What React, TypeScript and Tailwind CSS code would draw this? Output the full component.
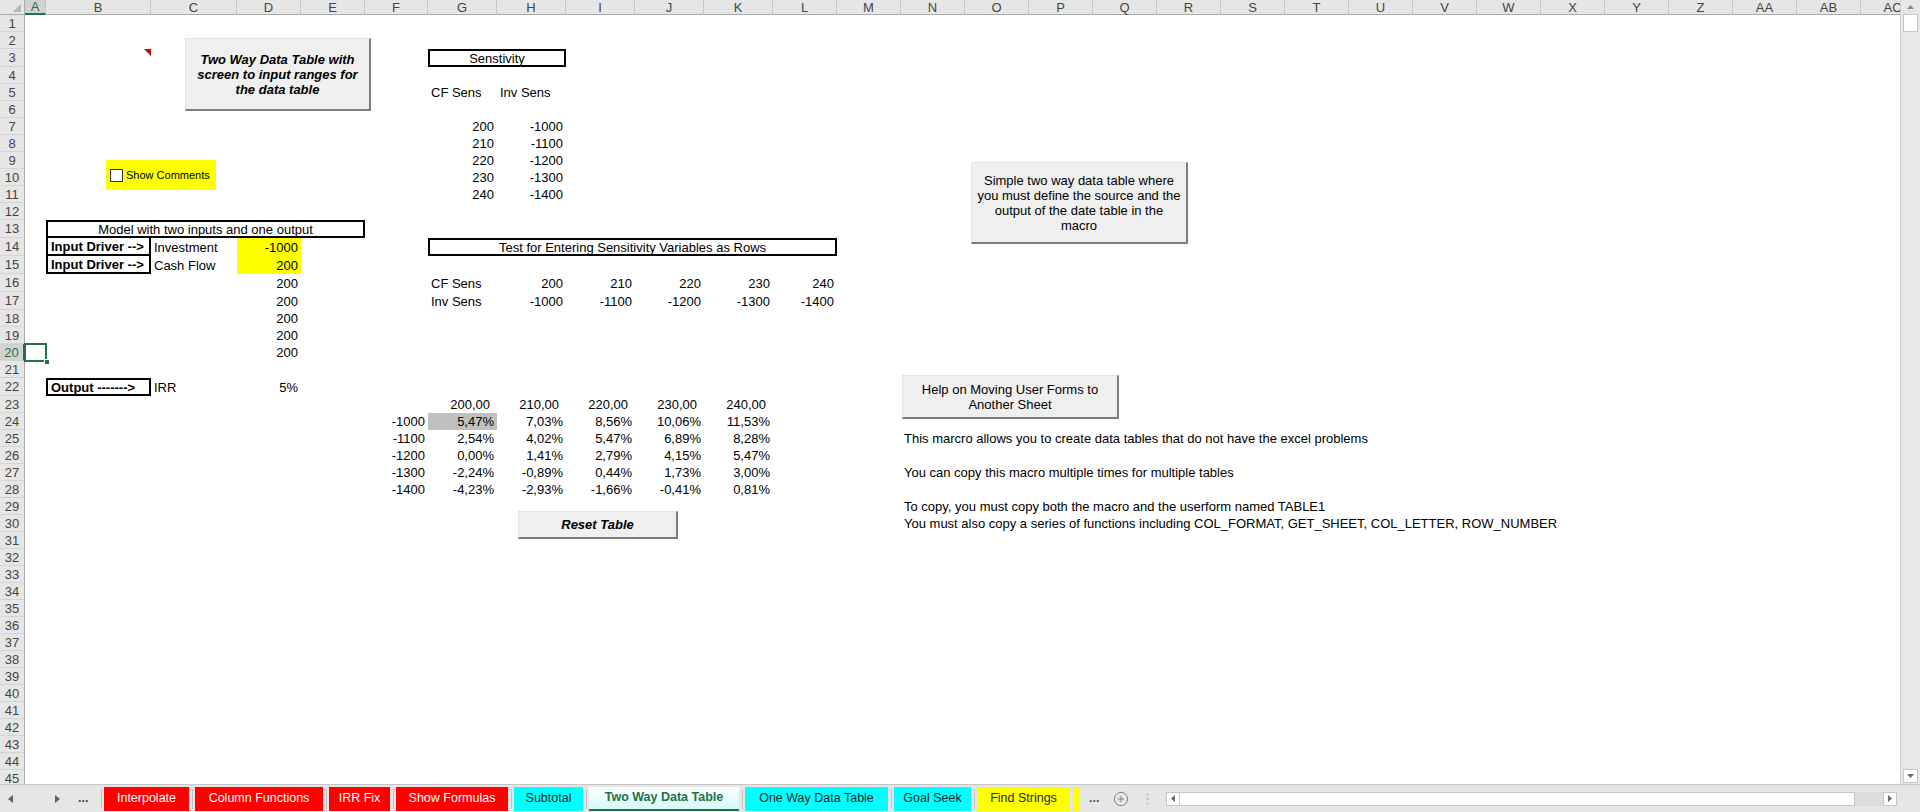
import React from 'react';
import { CirclePlus } from 'lucide-react';

type Cell = { t?: string; cls?: string; span?: number; extra?: React.ReactNode };
type Row = Record<string, Cell>;

const COLS = ['A', 'B', 'C', 'D', 'E', 'F', 'G', 'H', 'I', 'J', 'K', 'L', 'M', 'N', 'O', 'P', 'Q', 'R', 'S', 'T', 'U', 'V', 'W', 'X', 'Y', 'Z', 'AA', 'AB', 'AC'];

const R = 'justify-end';
const YEL = 'justify-end bg-[#ffff00]';

const CommentMark = () => (
  <span className="absolute right-0 top-0 h-0 w-0 border-l-[7px] border-t-[7px] border-l-transparent border-t-[#e00000]" />
);

const ActiveCell = () => (
  <>
    <span className="absolute -left-px -top-px -right-px -bottom-px border-2 border-[#217346]" />
    <span className="absolute -right-[4px] -bottom-[4px] h-[6px] w-[6px] border border-white bg-[#217346]" />
  </>
);

// sheet contents, by row number then column letter
const sheet: Record<number, Row> = {
  3: {
    B: { cls: 'relative', extra: <CommentMark /> },
    G: { t: 'Senstivity', span: 2, cls: 'col-span-2 justify-center border-2 border-black' },
  },
  5: { G: { t: 'CF Sens' }, H: { t: 'Inv Sens' } },
  13: {
    B: { t: 'Model with two inputs and one output', span: 4, cls: 'col-span-4 justify-center border-2 border-black' },
  },
  14: {
    B: { t: 'Input Driver -->', cls: 'font-bold border-x-2 border-b-2 border-black' },
    C: { t: 'Investment' },
    D: { t: '-1000', cls: YEL },
    G: { t: 'Test for Entering Sensitivity Variables as Rows', span: 6, cls: 'col-span-6 justify-center border-2 border-black' },
  },
  15: {
    B: { t: 'Input Driver -->', cls: 'font-bold border-x-2 border-b-2 border-black' },
    C: { t: 'Cash Flow' },
    D: { t: '200', cls: YEL },
  },
  16: {
    D: { t: '200', cls: R },
    G: { t: 'CF Sens' },
    H: { t: '200', cls: R },
    I: { t: '210', cls: R },
    J: { t: '220', cls: R },
    K: { t: '230', cls: R },
    L: { t: '240', cls: R },
  },
  17: {
    D: { t: '200', cls: R },
    G: { t: 'Inv Sens' },
    H: { t: '-1000', cls: R },
    I: { t: '-1100', cls: R },
    J: { t: '-1200', cls: R },
    K: { t: '-1300', cls: R },
    L: { t: '-1400', cls: R },
  },
  18: { D: { t: '200', cls: R } },
  19: { D: { t: '200', cls: R } },
  20: { A: { cls: 'relative z-10', extra: <ActiveCell /> }, D: { t: '200', cls: R } },
  22: {
    B: { t: 'Output ------->', cls: 'font-bold border-2 border-black' },
    C: { t: 'IRR' },
    D: { t: '5%', cls: R },
  },
  23: {
    G: { t: '200,00', cls: 'justify-end pr-[7px]' },
    H: { t: '210,00', cls: 'justify-end pr-[7px]' },
    I: { t: '220,00', cls: 'justify-end pr-[7px]' },
    J: { t: '230,00', cls: 'justify-end pr-[7px]' },
    K: { t: '240,00', cls: 'justify-end pr-[7px]' },
  },
};

// sensitivity list rows 7-11
[['200', '-1000'], ['210', '-1100'], ['220', '-1200'], ['230', '-1300'], ['240', '-1400']].forEach(([a, b], i) => {
  sheet[7 + i] = { G: { t: a, cls: R }, H: { t: b, cls: R } };
});

// data table result rows 24-28
const results: [string, string[]][] = [
  ['-1000', ['5,47%', '7,03%', '8,56%', '10,06%', '11,53%']],
  ['-1100', ['2,54%', '4,02%', '5,47%', '6,89%', '8,28%']],
  ['-1200', ['0,00%', '1,41%', '2,79%', '4,15%', '5,47%']],
  ['-1300', ['-2,24%', '-0,89%', '0,44%', '1,73%', '3,00%']],
  ['-1400', ['-4,23%', '-2,93%', '-1,66%', '-0,41%', '0,81%']],
];
results.forEach(([inv, vals], i) => {
  const row: Row = { F: { t: inv, cls: R } };
  ['G', 'H', 'I', 'J', 'K'].forEach((c, j) => {
    row[c] = { t: vals[j], cls: i === 0 && j === 0 ? 'justify-end bg-[#c0c0c0]' : R };
  });
  sheet[24 + i] = row;
});

sheet[25].N = { t: 'This marcro allows you to create data tables that do not have the excel problems' };
sheet[27].N = { t: 'You can copy this macro multiple times for multiple tables' };
sheet[29] = { N: { t: 'To copy, you must copy both the macro and the userform named TABLE1' } };
sheet[30] = { N: { t: 'You must also copy a series of functions including COL_FORMAT, GET_SHEET, COL_LETTER, ROW_NUMBER' } };

const TALL = [3, 13, 14, 15, 16, 17, 22];

const FormButton = ({ className, children }: { className: string; children: React.ReactNode }) => (
  <div
    className={`absolute z-20 flex items-center justify-center text-center text-[13px] leading-[15px] text-black bg-[#efefef] border-t border-l border-[#e2e2e2] border-r-2 border-b-2 border-r-[#7d7d7d] border-b-[#7d7d7d] ${className}`}
  >
    {children}
  </div>
);

const Sheet = () => {
  const cells: React.ReactNode[] = [];

  // column header row
  cells.push(
    <div key="corner" className="relative bg-[#e6e6e6] border-r border-b border-[#ababab]">
      <svg className="absolute right-[3px] bottom-[2px]" width="8" height="8" viewBox="0 0 8 8">
        <polygon points="8,0 8,8 0,8" fill="#b5b5b5" />
      </svg>
    </div>
  );
  COLS.forEach((c) => {
    cells.push(
      <div
        key={`h-${c}`}
        className={
          c === 'A'
            ? 'flex items-center justify-center text-[13px] leading-none bg-[#d2d2d2] text-[#217346] border-b-2 border-[#217346] border-r border-r-[#c6c6c6]'
            : 'flex items-center justify-center text-[13px] leading-none bg-[#e6e6e6] text-[#444] border-b border-[#ababab] border-r border-r-[#c6c6c6]'
        }
      >
        {c}
      </div>
    );
  });

  for (let r = 1; r <= 45; r++) {
    cells.push(
      <div
        key={`r-${r}`}
        className={
          r === 20
            ? 'flex items-center justify-center text-[13px] leading-none bg-[#d2d2d2] text-[#217346] border-r-2 border-[#217346] border-b border-b-[#d4d4d4]'
            : 'flex items-center justify-center text-[13px] leading-none bg-[#e6e6e6] text-[#444] border-r border-[#ababab] border-b border-b-[#d4d4d4]'
        }
      >
        {r}
      </div>
    );
    const def = sheet[r] || {};
    let skip = 0;
    COLS.forEach((col) => {
      if (skip > 0) {
        skip--;
        return;
      }
      const c = def[col];
      if (c?.span) skip = c.span - 1;
      cells.push(
        <div
          key={`${col}${r}`}
          className={`flex items-center whitespace-nowrap px-[3px] text-[13px] leading-none text-black ${c?.cls ?? ''}`}
        >
          {c?.t}
          {c?.extra}
        </div>
      );
    });
  }

  return (
    <div className="relative h-full w-[1900px] overflow-hidden bg-white">
      <div className="grid grid-cols-[25px_21px_105px_86px_64px_64px_63px_69px_69px_69px_69px_69px_repeat(18,64px)] grid-rows-[15px_17px_17px_18px_17px_17px_17px_17px_17px_17px_17px_17px_17px_18px_18px_18px_18px_18px_17px_17px_17px_17px_18px_repeat(23,17px)]">
        {cells}
      </div>

      <FormButton className="left-[185px] top-[38px] w-[186px] h-[73px] font-bold italic">
        Two Way Data Table with
        <br />
        screen to input ranges for
        <br />
        the data table
      </FormButton>

      <div className="absolute left-[106px] top-[160px] z-20 flex h-[30px] w-[110px] items-center gap-[3px] bg-[#ffff00] pl-[4px]">
        <span className="h-[13px] w-[13px] border border-[#333] bg-white" />
        <span className="text-[11px] leading-none text-black">Show Comments</span>
      </div>

      <FormButton className="left-[971px] top-[162px] w-[217px] h-[82px]">
        Simple two way data table where
        <br />
        you must define the source and the
        <br />
        output of the date table in the
        <br />
        macro
      </FormButton>

      <FormButton className="left-[902px] top-[375px] w-[217px] h-[44px]">
        Help on Moving User Forms to
        <br />
        Another Sheet
      </FormButton>

      <FormButton className="left-[518px] top-[511px] w-[160px] h-[28px] font-bold italic">Reset Table</FormButton>
    </div>
  );
};

const VScroll = () => (
  <div className="flex h-full w-[20px] flex-col bg-[#e8e8e8] border-l border-[#d0d0d0]">
    <div className="flex h-[14px] items-center justify-center">
      <svg width="7" height="4" viewBox="0 0 7 4">
        <polygon points="0,4 3.5,0 7,4" fill="#8a8a8a" />
      </svg>
    </div>
    <div className="mx-[2px] h-[18px] border border-[#c6c6c6] bg-white" />
    <div className="flex-1" />
    <div className="mx-[2px] mb-px flex h-[14px] items-center justify-center border border-[#c6c6c6] bg-white">
      <svg width="7" height="4" viewBox="0 0 7 4">
        <polygon points="0,0 7,0 3.5,4" fill="#6a6a6a" />
      </svg>
    </div>
  </div>
);

type Tab = { name: string; w: string; cls: string };
const tabs: Tab[] = [
  { name: 'Interpolate', w: 'w-[85px]', cls: 'bg-[#ff0000] text-white' },
  { name: 'Column Functions', w: 'w-[128px]', cls: 'bg-[#ff0000] text-white' },
  { name: 'IRR Fix', w: 'w-[61px]', cls: 'bg-[#ff0000] text-white' },
  { name: 'Show Formulas', w: 'w-[112px]', cls: 'bg-[#ff0000] text-white' },
  { name: 'Subtotal', w: 'w-[69px]', cls: 'bg-[#00ffff] text-[#262626]' },
  {
    name: 'Two Way Data Table',
    w: 'w-[150px]',
    cls: 'bg-linear-to-b from-white to-[#d4fafa] text-[#217346] font-bold border-b-2 border-[#217346]',
  },
  { name: 'One Way Data Table', w: 'w-[143px]', cls: 'bg-[#00ffff] text-[#262626]' },
  { name: 'Goal Seek', w: 'w-[77px]', cls: 'bg-[#00ffff] text-[#262626]' },
  { name: 'Find Strings', w: 'w-[93px]', cls: 'bg-[#ffff00] text-[#262626]' },
];

const Sep = () => (
  <div className="flex h-[24px] w-[6px] items-center justify-center">
    <div className="h-[20px] w-px bg-[#c2c2c2]" />
  </div>
);

const TabBar = () => (
  <div className="flex h-[28px] w-full items-center border-t border-[#c6c6c6] bg-[#e6e6e6] text-[12.5px]">
    <div className="flex h-[24px] w-[98px] items-center">
      <svg className="ml-[8px]" width="5" height="8" viewBox="0 0 5 8">
        <polygon points="5,0 5,8 0,4" fill="#4f6b5e" />
      </svg>
      <svg className="ml-[42px]" width="5" height="8" viewBox="0 0 5 8">
        <polygon points="0,0 5,4 0,8" fill="#4f6b5e" />
      </svg>
      <span className="ml-[18px] font-bold leading-none text-[#444]">...</span>
    </div>
    <Sep />
    {tabs.map((t, i) => (
      <React.Fragment key={t.name}>
        {i > 0 && <Sep />}
        <div className={`flex h-[24px] items-center justify-center whitespace-nowrap leading-none ${t.w} ${t.cls}`}>
          {t.name}
        </div>
      </React.Fragment>
    ))}
    <div className="ml-[3px] h-[24px] w-[7px] bg-[#ffff00]" />
    <span className="ml-[9px] w-[12px] font-bold leading-none text-[#555]">...</span>
    <CirclePlus className="ml-[12px] text-[#7a7a7a]" size={16} strokeWidth={1.4} />
    <svg className="ml-[17px]" width="3" height="12" viewBox="0 0 3 12">
      <circle cx="1.5" cy="1.5" r="1" fill="#b4b4b4" />
      <circle cx="1.5" cy="6" r="1" fill="#b4b4b4" />
      <circle cx="1.5" cy="10.5" r="1" fill="#b4b4b4" />
    </svg>
    <div className="ml-[17px] flex h-[14px] w-[731px]">
      <div className="flex h-full w-[14px] items-center justify-center border border-[#c6c6c6] bg-white">
        <svg width="4" height="7" viewBox="0 0 4 7">
          <polygon points="4,0 4,7 0,3.5" fill="#6a6a6a" />
        </svg>
      </div>
      <div className="h-full flex-1 border-y border-r border-[#c6c6c6] bg-white" />
      <div className="h-full w-[28px] bg-[#dcdcdc]" />
      <div className="flex h-full w-[14px] items-center justify-center border border-[#c6c6c6] bg-white">
        <svg width="4" height="7" viewBox="0 0 4 7">
          <polygon points="0,0 4,3.5 0,7" fill="#6a6a6a" />
        </svg>
      </div>
    </div>
  </div>
);

export default function App() {
  return (
    <div className="flex h-[812px] w-[1920px] flex-col overflow-hidden bg-white font-['Liberation_Sans',Arial,sans-serif]">
      <div className="flex h-[784px] w-full">
        <Sheet />
        <VScroll />
      </div>
      <TabBar />
    </div>
  );
}
